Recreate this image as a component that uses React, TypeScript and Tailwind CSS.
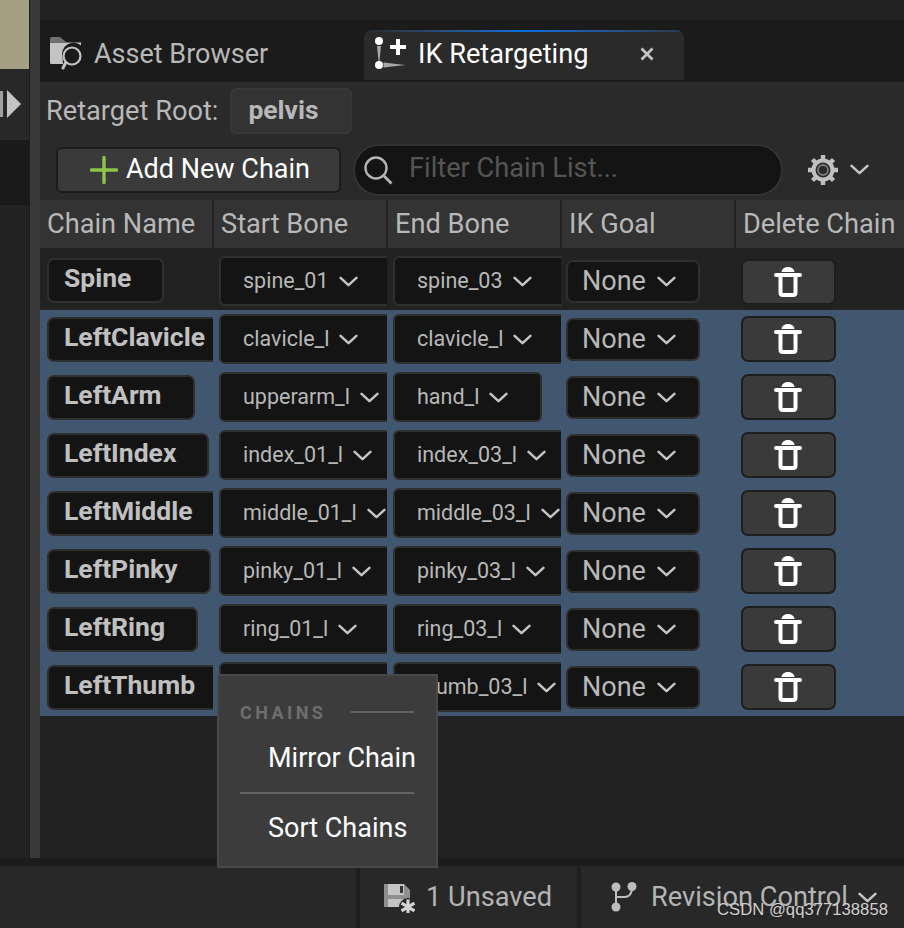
const ROWS = [
  { name: 'Spine', start: 'spine_01', end: 'spine_03', selected: false },
  { name: 'LeftClavicle', start: 'clavicle_l', end: 'clavicle_l', selected: true },
  { name: 'LeftArm', start: 'upperarm_l', end: 'hand_l', selected: true },
  { name: 'LeftIndex', start: 'index_01_l', end: 'index_03_l', selected: true },
  { name: 'LeftMiddle', start: 'middle_01_l', end: 'middle_03_l', selected: true },
  { name: 'LeftPinky', start: 'pinky_01_l', end: 'pinky_03_l', selected: true },
  { name: 'LeftRing', start: 'ring_01_l', end: 'ring_03_l', selected: true },
  { name: 'LeftThumb', start: 'thumb_01_l', end: 'thumb_03_l', selected: true },
]

const HEADERS = ['Chain Name', 'Start Bone', 'End Bone', 'IK Goal', 'Delete Chain']

function Chevron({ className }: { className: string }) {
  return (
    <svg viewBox="0 0 18 10" fill="none" className={className}>
      <path d="M1.500 1.500 9 8.500l7.500-7" stroke="currentColor" strokeWidth="2.400" strokeLinecap="round" strokeLinejoin="round" />
    </svg>
  )
}

function Trash() {
  return (
    <svg viewBox="0 0 28 30" className="h-[30px] w-[28px] text-white" fill="none">
      <path d="M7.500 5c.4-3.400 3.400-5 6.500-5s6.100 1.600 6.500 5z" fill="currentColor" />
      <path d="M2 8h24" stroke="currentColor" strokeWidth="4" strokeLinecap="round" />
      <path d="M6.500 10v15.500c0 1.700.8 2.500 2.500 2.500h10c1.700 0 2.500-.8 2.500-2.500V10" stroke="currentColor" strokeWidth="4" />
    </svg>
  )
}

function AssetIcon() {
  return (
    <svg viewBox="0 0 33 33" className="h-[33px] w-[33px]" fill="none">
      <path d="M0 2c0-1 .6-2 1.500-2h8.500l6 5H0z" fill="#707070" />
      <path d="M0 5.500h31v3a11.500 11.500 0 0 0-18.500 12l.5 6.500H1.500C.6 27 0 26.500 0 25.500z" fill="#c4c4c4" />
      <circle cx="22" cy="19" r="8.500" stroke="#c4c4c4" strokeWidth="2.200" />
      <path d="M15.500 26 13 31" stroke="#c4c4c4" strokeWidth="3" strokeLinecap="round" />
    </svg>
  )
}

function IkIcon() {
  return (
    <svg viewBox="0 0 34 36" className="h-[36px] w-[34px]">
      <circle cx="5" cy="5" r="4" fill="#fff" />
      <circle cx="5" cy="29" r="4" fill="#fff" />
      <path d="M3 10h4l-1.500 15h-1z" fill="#a8a8a8" />
      <path d="M9.500 26.500v5l22-2.500z" fill="#a8a8a8" />
      <path d="M16 11h16M24 3v16" stroke="#fff" strokeWidth="4" />
    </svg>
  )
}

function Gear() {
  return (
    <svg viewBox="0 0 30 30" className="h-[30px] w-[30px]" fill="none">
      <circle cx="15" cy="15" r="9.500" stroke="#c0c0c0" strokeWidth="4" />
      <circle cx="15" cy="15" r="5" stroke="#7a7a7a" strokeWidth="1.800" />
      <path
        d="M15 0v5M15 25v5M0 15h5M25 15h5M4.500 4.500l3.500 3.500M22 22l3.500 3.500M25.500 4.500 22 8M8 22l-3.500 3.500"
        stroke="#c0c0c0"
        strokeWidth="4.400"
      />
    </svg>
  )
}

function SaveIcon() {
  return (
    <svg viewBox="0 0 34 32" className="h-[32px] w-[34px]">
      <path d="M0 3h20l6 6v17H0z" fill="#8f8f8f" />
      <path d="M4 3h16v11H4z" fill="#c4c4c4" />
      <path d="M4 18h15v8H4z" fill="#c4c4c4" />
      <path d="M16 5h3v7h-3z" fill="#333" />
      <circle cx="24" cy="26" r="9" fill="#282828" />
      <path d="M24 18.500v15M17.500 22.200l13 7.600M30.500 22.200l-13 7.600" stroke="#d4d4d4" strokeWidth="3.200" />
    </svg>
  )
}

function BranchIcon() {
  return (
    <svg viewBox="0 0 28 30" className="h-[30px] w-[28px]" fill="none">
      <circle cx="5" cy="5" r="4.500" fill="#bdbdbd" />
      <circle cx="21" cy="4.500" r="4.500" fill="#bdbdbd" />
      <circle cx="5" cy="25" r="4.500" fill="#bdbdbd" />
      <path d="M5 8v15M5 15h9c4 0 6-3 7-7" stroke="#bdbdbd" strokeWidth="2" />
    </svg>
  )
}

function BoneCombo({ label }: { label: string }) {
  return (
    <div className="flex h-full w-max shrink-0 items-center gap-[10px] rounded-[6px] border-2 border-[#2f2f2f] bg-[#141414] pl-[22px] pr-[32px] text-[21.5px] text-[#b8b8b8]">
      <span className="whitespace-nowrap">{label}</span>
      <Chevron className="h-[11px] w-[19px] shrink-0 text-[#c4c4c4]" />
    </div>
  )
}

function ChainRow({ row }: { row: (typeof ROWS)[number] }) {
  const combo = row.selected ? 'mt-[4px] h-[50px]' : 'mt-[8px] h-[50px]'
  return (
    <div className={`grid grid-cols-[174px_174px_174px_174px_1fr] ${row.selected ? 'h-[58px] bg-[#415770]' : 'h-[62px] bg-[#222222]'}`}>
      <div className="mr-[1px] overflow-hidden pl-[7px]">
        <div className={`${row.selected ? 'mt-[7px]' : 'mt-[10px]'} flex h-[45px] w-max items-center rounded-[7px] border-2 border-[#2f2f2f] bg-[#141414] pb-[5px] pl-[15px] pr-[31px] text-[26.5px] font-bold text-[#c0c0c0]`}>
          {row.name}
        </div>
      </div>
      <div className="mr-[1px] overflow-hidden pl-[5px]">
        <div className={combo}><BoneCombo label={row.start} /></div>
      </div>
      <div className="mr-[1px] overflow-hidden pl-[5px]">
        <div className={combo}><BoneCombo label={row.end} /></div>
      </div>
      <div className="pl-[4px]">
        <div className={`${row.selected ? 'mt-[8px]' : 'mt-[12px]'} flex h-[43px] w-[134px] items-center gap-[11px] rounded-[7px] border-2 border-[#2f2f2f] bg-[#141414] pl-[14px] text-[27px] text-[#b8b8b8]`}>
          None
          <Chevron className="h-[11px] w-[19px] text-[#c4c4c4]" />
        </div>
      </div>
      <div className="pl-[5px]">
        <div className={`${row.selected ? 'mt-[6px]' : 'mt-[11px]'} flex h-[46px] w-[95px] items-center justify-center rounded-[7px] border-2 border-[#1e1e1e] bg-[#3a3a3a] pr-[1px]`}>
          <Trash />
        </div>
      </div>
    </div>
  )
}

export default function App() {
  return (
    <div className="relative flex h-[928px] w-[904px] flex-col overflow-hidden bg-[#222222] font-['Roboto',sans-serif]">
      <div className="flex h-[858px] min-h-0">
        <div className="flex w-[29px] flex-col bg-[#222222]">
          <div className="h-[69px] bg-[#a5a084]" />
          <div className="flex h-[71px] items-center bg-[#282828] pb-[1px]">
            <div className="h-[26px] w-[3px] bg-[#a0a0a0]" />
            <svg viewBox="0 0 16 30" className="ml-[3px] h-[30px] w-[16px]">
              <path d="M1 1 15 15 1 29z" fill="#c4c4c4" />
            </svg>
          </div>
          <div className="h-[65px] bg-[#1a1a1a]" />
        </div>
        <div className="w-[1px] bg-[#1c1c1c]" />
        <div className="w-[10px] bg-[#383838]" />
        <div className="flex min-w-0 flex-1 flex-col">
          <div className="h-[20px] bg-[#222222]" />
          <div className="flex h-[62px] bg-[#1b1b1b] pt-[10px]">
            <div className="flex w-[324px] items-start gap-[11px] pl-[10px] pt-[7px] text-[27px] leading-[32px] text-[#b8b8b8]">
              <AssetIcon />
              <span className="mt-[1px]">Asset Browser</span>
            </div>
            <div className="flex h-[50px] w-[320px] flex-col overflow-hidden rounded-t-[8px] bg-[#2a2a2a] text-[27.2px] text-white">
              <div className="h-[2px] bg-gradient-to-r from-[#2a2a2a] via-[#0070e0] to-[#2a3a4a]" />
              <div className="flex flex-1 items-center pb-[4px] pl-[10px]">
                <IkIcon />
                <span className="ml-[10px]">IK Retargeting</span>
                <span className="ml-[52px] text-[#c4c4c4]">
                  <svg viewBox="0 0 14 14" className="h-[14px] w-[14px]">
                    <path d="M1.500 1.500l11 11M12.500 1.500l-11 11" stroke="currentColor" strokeWidth="2.800" />
                  </svg>
                </span>
              </div>
            </div>
          </div>
          <div className="flex h-[58px] items-center bg-[#2a2a2a] pl-[6px]">
            <span className="text-[27.2px] text-[#b8b8b8]">Retarget Root:</span>
            <div className="ml-[12px] flex h-[46px] w-[122px] items-center rounded-[6px] border-2 border-[#383838] bg-[#333333] pb-[3px] pl-[16px] text-[26.5px] font-bold text-[#b8b8b8]">
              pelvis
            </div>
          </div>
          <div className="flex h-[60px] items-center bg-[#2a2a2a] pl-[16px]">
            <div className="flex h-[46px] w-[285px] items-center rounded-[6px] border-2 border-[#1c1c1c] bg-[#3a3a3a] pb-[2px] pl-[32px] text-[27px] text-white">
              <svg viewBox="0 0 28 28" className="mr-[8px] mt-[2px] h-[28px] w-[28px]">
                <path d="M1.500 14h25M14 1.500v25" stroke="#8cc44a" strokeWidth="3.400" strokeLinecap="round" />
              </svg>
              Add New Chain
            </div>
            <div className="ml-[12px] flex h-[52px] w-[430px] items-center rounded-full border-2 border-[#333333] bg-[#141414] pb-[3px] pl-[8px] text-[27.2px] text-[#555555]">
              <svg viewBox="0 0 30 30" className="mt-[3px] h-[30px] w-[30px]" fill="none">
                <circle cx="13" cy="13" r="10.500" stroke="#b4b4b4" strokeWidth="2.400" />
                <path d="M21 21l7.500 7.500" stroke="#b4b4b4" strokeWidth="2.800" />
              </svg>
              <span className="ml-[16px]">Filter Chain List...</span>
            </div>
            <div className="-mt-[1px] ml-[25px] flex items-center gap-[12px]">
              <Gear />
              <Chevron className="h-[11px] w-[19px] text-[#c4c4c4]" />
            </div>
          </div>
          <div className="grid h-[48px] grid-cols-[174px_174px_174px_174px_1fr] bg-[#333333] text-[27.2px] text-[#b8b8b8]">
            {HEADERS.map((h, i) => (
              <div key={h} className={`flex items-center whitespace-nowrap pl-[7px] ${i < 4 ? 'border-r-2 border-[#232323]' : ''}`}>
                {h}
              </div>
            ))}
          </div>
          {ROWS.map((row) => (
            <ChainRow key={row.name} row={row} />
          ))}
          <div className="flex-1 bg-[#222222]" />
        </div>
      </div>
      <div className="h-[8px] bg-[#1c1c1c]" />
      <div className="flex h-[62px] bg-[#282828] text-[27.2px] text-[#b4b4b4]">
        <div className="w-[356px]" />
        <div className="w-[4px] bg-[#1e1e1e]" />
        <div className="flex w-[217px] items-center pl-[24px]">
          <SaveIcon />
          <span className="ml-[8px]">1 Unsaved</span>
        </div>
        <div className="w-[4px] bg-[#1e1e1e]" />
        <div className="flex flex-1 items-center pl-[30px]">
          <BranchIcon />
          <span className="ml-[12px] whitespace-nowrap">Revision Control</span>
          <Chevron className="ml-[10px] h-[11px] w-[19px] shrink-0 text-[#c4c4c4]" />
        </div>
      </div>

      <div className="absolute left-[217px] top-[674px] h-[194px] w-[221px] border-2 border-[#484848] bg-[#3c3c3c] text-[27px] text-white">
        <div className="flex h-[74px] items-center pb-[2px] pl-[21px]">
          <span className="text-[18px] font-bold tracking-[0.19em] text-[#6e6e6e]">CHAINS</span>
          <div className="ml-[25px] h-[2px] w-[63px] bg-[#636363]" />
        </div>
        <div className="-mt-[8px] pl-[49px] leading-[32px]">Mirror Chain</div>
        <div className="ml-[21px] mt-[18px] h-[2px] w-[174px] bg-[#636363]" />
        <div className="mt-[18px] pl-[49px] leading-[32px]">Sort Chains</div>
      </div>

      <div className="absolute left-[717px] top-[897px] font-['Liberation_Sans',sans-serif] text-[16.7px] text-[#d0d0d0] [text-shadow:1px_1px_1px_#222]">
        CSDN @qq377138858
      </div>
    </div>
  )
}
